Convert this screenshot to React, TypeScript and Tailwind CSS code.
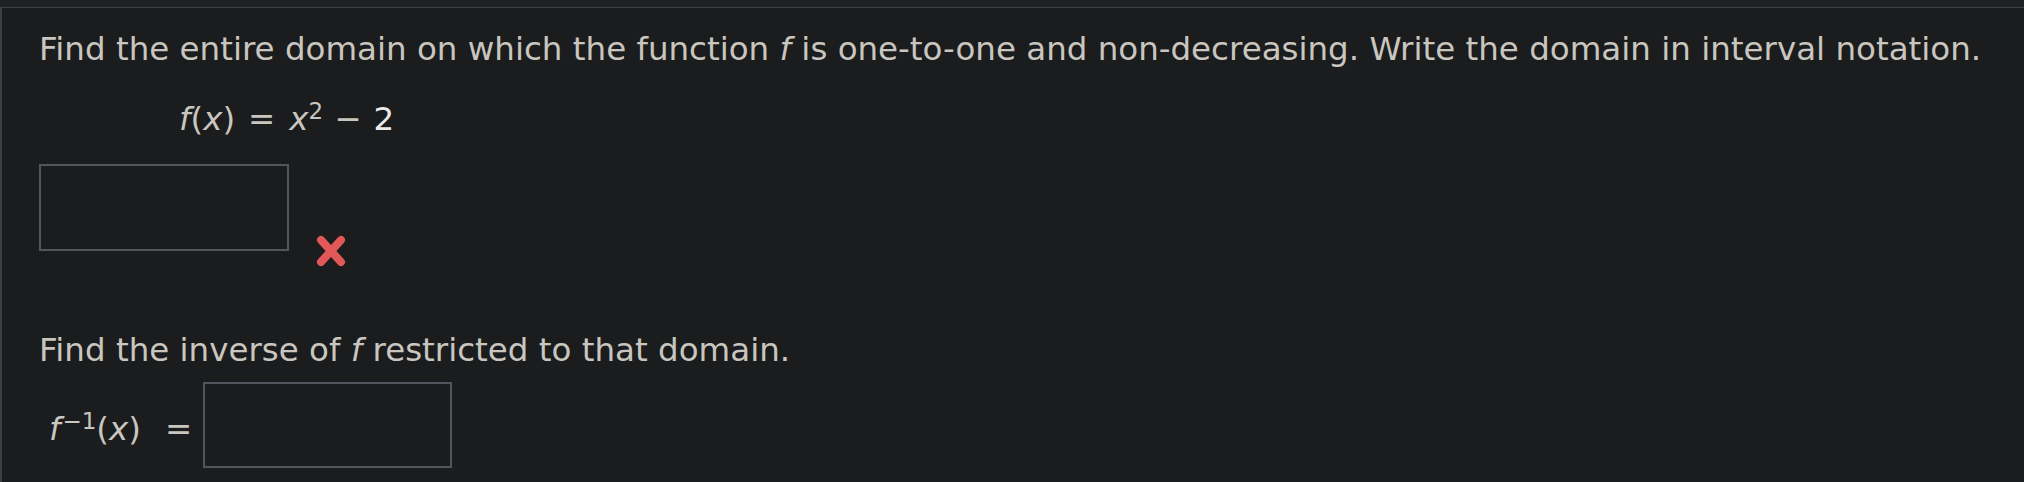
import React from "react";

const font = { fontFamily: '"DejaVu Sans", Verdana, sans-serif' };

function WrongMark() {
  return (
    <svg width="36" height="38" viewBox="0 0 36 38" className="block">
      <path
        d="M8 8 L28 30 M28 8 L8 30"
        stroke="#e25757"
        strokeWidth="8"
        strokeLinecap="round"
      />
    </svg>
  );
}

export default function App() {
  return (
    <div className="h-[482px] w-full bg-[#1b1c1e] text-[#c9c6bf]" style={font}>
      <div className="h-[7px] bg-[#1f2022]" />
      <div className="h-[475px] border-t border-l-2 border-[#3b3f42] pl-[37px] pt-[20px]">
        <p className="text-[32.5px] leading-[42px] whitespace-nowrap">
          Find the entire domain on which the function <i>f</i> is one-to-one and
          non-decreasing. Write the domain in interval notation.
        </p>

        <div className="mt-[28px] pl-[140px] text-[32.5px] leading-[42px]">
          <i>f</i>(<i>x</i>)<span className="ml-[13px]">=</span>
          <i className="ml-[14px]">x</i>
          <sup className="text-[23px]">2</sup>
          <span className="ml-[11px]">−</span>
          <span className="ml-[12px] text-[#ebebeb]">2</span>
        </div>

        <div className="mt-[24px] flex items-start gap-[24px]">
          <div className="h-[87px] w-[250px] border-2 border-[#50565b]" />
          <div className="mt-[68px]">
            <WrongMark />
          </div>
        </div>

        <p className="mt-[59px] text-[32.5px] leading-[42px] whitespace-nowrap">
          Find the inverse of <i>f</i> restricted to that domain.
        </p>

        <div className="mt-[11px] flex items-center">
          <div className="ml-[10px] text-[32.5px] leading-[42px] pt-[8px]">
            <i>f</i>
            <sup className="ml-[2px] text-[23px]">−1</sup>(<i>x</i>)
            <span className="ml-[24px]">=</span>
          </div>
          <div className="ml-[11px] h-[86px] w-[249px] border-2 border-[#50565b]" />
        </div>
      </div>
    </div>
  );
}
